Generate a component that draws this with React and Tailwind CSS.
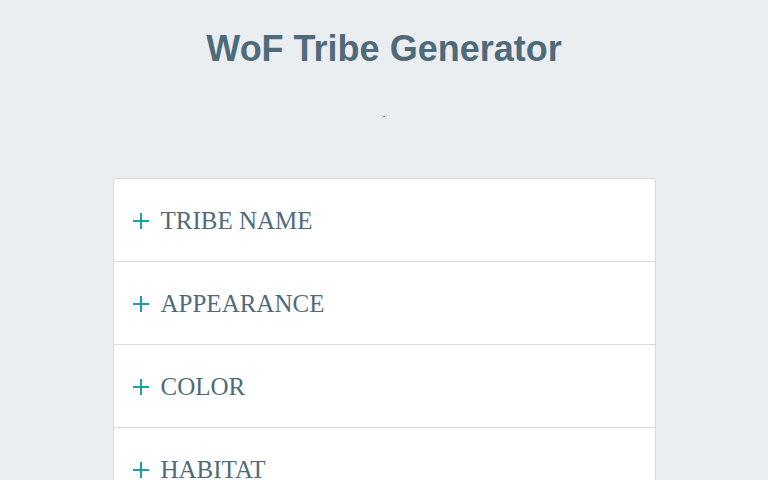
const SECTIONS = ['TRIBE NAME', 'APPEARANCE', 'COLOR', 'HABITAT', 'ABILITIES']

function Plus() {
  return (
    <svg width="16" height="16" viewBox="0 0 16 16" className="shrink-0">
      <path d="M8 0v16M0 8h16" stroke="#17a2ab" strokeWidth="2" />
    </svg>
  )
}

export default function App() {
  return (
    <div className="min-h-screen bg-[#ebeef1] flex flex-col items-center" style={{ fontFamily: '"Liberation Sans", Arial, sans-serif' }}>
      <h1 className="mt-[27px] text-[36px] leading-[44px] font-bold text-[#4f6b7a]">WoF Tribe Generator</h1>
      <p className="mt-[37px] text-[11px] leading-[10px] text-black">.</p>
      <div className="mt-[60px] w-[543px] bg-white border border-[#d5dadd] rounded-[3px]">
        {SECTIONS.map((s, i) => (
          <div
            key={s}
            className={`flex items-center gap-[12px] pl-[19px] pt-[2px] ${i > 0 ? 'h-[83px] border-t border-[#d5dadd]' : 'h-[82px]'}`}
          >
            <Plus />
            <span className="text-[25px] text-[#4f6b7a]" style={{ fontFamily: '"Liberation Serif", "Times New Roman", serif' }}>{s}</span>
          </div>
        ))}
      </div>
    </div>
  )
}
